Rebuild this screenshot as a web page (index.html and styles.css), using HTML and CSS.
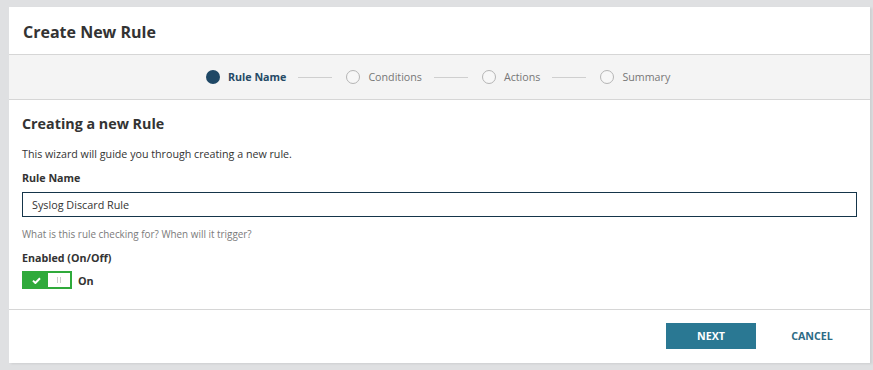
FILE: index.html
```html
<!DOCTYPE html>
<html>
<head>
<meta charset="utf-8">
<link rel="stylesheet" href="styles.css">
</head>
<body>
<div class="card">
  <div class="header"><h1 class="title">Create New Rule</h1></div>
  <div class="stepper">
    <div class="step active"><span class="dot"></span><span class="label">Rule Name</span></div>
    <span class="line"></span>
    <div class="step"><span class="dot"></span><span class="label">Conditions</span></div>
    <span class="line"></span>
    <div class="step"><span class="dot"></span><span class="label">Actions</span></div>
    <span class="line"></span>
    <div class="step"><span class="dot"></span><span class="label">Summary</span></div>
  </div>
  <div class="body">
    <h2 class="section">Creating a new Rule</h2>
    <p class="intro">This wizard will guide you through creating a new rule.</p>
    <label class="field-label">Rule Name</label>
    <div class="input">Syslog Discard Rule</div>
    <p class="hint">What is this rule checking for? When will it trigger?</p>
    <label class="field-label enabled">Enabled (On/Off)</label>
    <div class="toggle-row">
      <div class="toggle">
        <span class="on"><svg width="9" height="7" viewBox="0 0 9 7"><path d="M1 3.6 L3.4 6 L8 1.2" fill="none" stroke="#fff" stroke-width="2"/></svg></span>
        <span class="knob"><i></i><i></i></span>
      </div>
      <span class="toggle-text">On</span>
    </div>
  </div>
  <div class="footer">
    <button class="btn next">NEXT</button>
    <button class="btn cancel">CANCEL</button>
  </div>
</div>
</body>
</html>
```
FILE: styles.css
```css
html, body { margin: 0; padding: 0; }
body {
  background: #dfe0e2;
  font-family: "Open Sans", "Noto Sans", sans-serif;
  color: #333;
  width: 873px;
  height: 370px;
  overflow: hidden;
}
.card {
  margin: 7px 0 0 9px;
  width: 861px;
  height: 356px;
  background: #fff;
  display: flex;
  flex-direction: column;
  box-shadow: 2px 1px 2px rgba(0,0,0,0.08);
}
.header {
  height: 47px;
  border-bottom: 1px solid #d6d6d6;
  display: flex;
  align-items: center;
  padding-left: 14px;
}
.title {
  margin: 0;
  font-size: 16px;
  font-weight: 700;
  color: #333;
  position: relative;
  top: 1px;
}
.stepper {
  height: 44px;
  background: #f4f4f4;
  border-bottom: 1px solid #d6d6d6;
  display: flex;
  align-items: center;
  padding-left: 197px;
}
.step { display: flex; align-items: center; gap: 8px; }
.dot {
  width: 12px; height: 12px;
  border: 1px solid #b5b5b5;
  border-radius: 50%;
  background: #f7f7f7;
}
.step.active .dot { width: 14px; height: 14px; border: none; background: #1f4866; }
.label { font-size: 10.7px; color: #777; }
.step.active .label { font-weight: 700; color: #254a66; }
.line {
  width: 34px; height: 1px;
  background: #cfcfcf;
  margin: 0 14px 0 12px;
}
.body {
  padding: 14px 13px 0 13px;
  height: 195px;
  border-bottom: 1px solid #d6d6d6;
}
.section {
  margin: 0;
  font-size: 14.3px;
  font-weight: 700;
  color: #333;
  line-height: 20px;
}
.intro { margin: 12px 0 0; font-size: 10.7px; line-height: 16px; }
.field-label {
  display: block;
  font-size: 10.7px;
  font-weight: 700;
  margin-top: 8px;
  line-height: 16px;
}
.input {
  margin-top: 6px;
  height: 23px;
  border: 1.5px solid #15354a;
  font-size: 10.8px;
  line-height: 23px;
  padding-left: 9px;
  color: #333;
}
.hint { margin: 10px 0 0; font-size: 9.9px; color: #7b7b7b; line-height: 14px; }
.field-label.enabled { margin-top: 9px; }
.toggle-row { display: flex; align-items: center; gap: 6px; margin-top: 5px; }
.toggle {
  width: 50px; height: 18px;
  box-sizing: border-box;
  border: 2px solid #2faa3b;
  display: flex;
}
.toggle .on {
  width: 24px; background: #2faa3b;
  display: flex; align-items: center; justify-content: center;
}
.toggle .knob {
  flex: 1; background: #fff;
  display: flex; align-items: center; justify-content: center; gap: 2px;
}
.toggle .knob i { width: 1px; height: 6px; background: #ccc; display: block; }
.toggle-text { font-size: 10.8px; font-weight: 700; }
.footer {
  flex: 1;
  display: flex;
  align-items: flex-start;
  justify-content: flex-end;
  padding: 13px 12px 0 0;
}
.btn {
  font-family: "Open Sans", "Noto Sans", sans-serif;
  font-size: 10.7px;
  font-weight: 700;
  border: none;
  height: 26px;
  cursor: pointer;
  padding: 0;
}
.btn.next { background: #2a7893; color: #fff; width: 90px; }
.btn.cancel { background: transparent; color: #2d6b85; width: 92px; margin-left: 10px; }
```
